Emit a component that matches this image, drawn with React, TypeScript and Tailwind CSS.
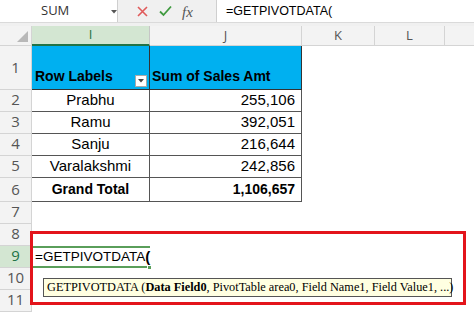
import React from "react";

const font = { fontFamily: '"Liberation Sans", Arial, sans-serif' };

function RowHead({ n, h, sel }: { n: number; h: string; sel?: boolean }) {
  return (
    <div
      className={`w-[32px] shrink-0 flex items-end justify-center pb-[1px] border-b border-r border-[#d4d4d4] text-[15px] ${h} ${
        sel ? "bg-[#d3e6d2] text-[#217346]" : "bg-[#f3f3f3] text-[#555]"
      }`}
      style={{ fontFamily: '"Open Sans", sans-serif' }}
    >
      {n}
    </div>
  );
}

function DataRow({ n, name, val, bold, h = "h-[22px]" }: { n: number; name: string; val: string; bold?: boolean; h?: string }) {
  return (
    <div className={`flex ${h}`}>
      <RowHead n={n} h={h} />
      <div
        className={`w-[118px] shrink-0 flex items-center justify-center border-b border-r border-[#555] text-black ${
          bold ? "font-bold text-[14px]" : "text-[15px]"
        }`}
      >
        {name}
      </div>
      <div
        className={`w-[152px] shrink-0 flex items-center justify-end pr-[6px] border-b border-r border-[#555] text-black ${
          bold ? "font-bold text-[14px]" : "text-[15px]"
        }`}
      >
        {val}
      </div>
      <div className="flex-1 bg-white" />
    </div>
  );
}

function EmptyRow({ n, sel, children }: { n: number; sel?: boolean; children?: React.ReactNode }) {
  return (
    <div className="flex h-[22px]">
      <RowHead n={n} h="h-[22px]" sel={sel} />
      {children ?? <div className="flex-1 bg-white" />}
    </div>
  );
}

export default function App() {
  return (
    <div className="relative w-[474px] h-[312px] overflow-hidden bg-white" style={font}>
      {/* formula bar */}
      <div className="flex h-[23px] bg-[#f0f0f0] border-b border-[#dadada]">
        <div className="w-[118px] h-[22px] bg-white border-r border-[#cfcfcf] flex items-center relative">
          <span className="absolute left-[41px] text-[13px] text-[#333]" style={{ fontFamily: '"Open Sans", sans-serif' }}>
            SUM
          </span>
          <svg className="absolute left-[111px] top-[10px]" width="6" height="4" viewBox="0 0 6 4">
            <path d="M0 0 L6 0 L3 3.5 Z" fill="#555" />
          </svg>
        </div>
        <div className="w-[98px] flex items-center relative">
          <svg className="absolute left-[19px] top-[6px]" width="11" height="11" viewBox="0 0 11 11">
            <path d="M1 1 L10 10 M10 1 L1 10" stroke="#e05a5a" strokeWidth="1.6" />
          </svg>
          <svg className="absolute left-[41px] top-[5px]" width="13" height="12" viewBox="0 0 13 12">
            <path d="M1 6.5 L4.5 10 L12 1.5" stroke="#3f9a3f" strokeWidth="1.8" fill="none" />
          </svg>
          <span
            className="absolute left-[64px] top-[1px] text-[15px] italic text-[#555]"
            style={{ fontFamily: '"Liberation Serif", serif' }}
          >
            fx
          </span>
        </div>
        <div className="flex-1 h-[22px] bg-white border-l border-[#cfcfcf] flex items-center pl-[9px] text-[12.5px] text-black">
          =GETPIVOTDATA(
        </div>
      </div>
      <div className="h-[3px] bg-[#f0f0f0]" />
      {/* column headers */}
      <div className="flex h-[20px] bg-[#f3f3f3] text-[13px] text-[#555]" style={{ fontFamily: '"Open Sans", sans-serif' }}>
        <div className="w-[32px] shrink-0 border-r border-b border-[#d4d4d4] relative">
          <svg className="absolute left-[17px] top-[5px]" width="11" height="11" viewBox="0 0 11 11">
            <path d="M11 0 L11 11 L0 11 Z" fill="#b8b8b8" />
          </svg>
        </div>
        <div className="w-[118px] shrink-0 bg-[#d3e6d2] text-[#217346] border-b-2 border-[#217346] border-r border-r-[#c6c6c6] flex items-center justify-center">
          I
        </div>
        <div className="w-[152px] shrink-0 border-r border-b border-[#d4d4d4] flex items-center justify-center">J</div>
        <div className="w-[73px] shrink-0 border-r border-b border-[#d4d4d4] flex items-center justify-center">K</div>
        <div className="w-[70px] shrink-0 border-r border-b border-[#d4d4d4] flex items-center justify-center">L</div>
        <div className="flex-1 border-b border-[#d4d4d4]" />
      </div>
      {/* row 1 */}
      <div className="flex h-[44px]">
        <div
          className="w-[32px] shrink-0 flex items-center justify-center border-b border-r border-[#d4d4d4] bg-[#f3f3f3] text-[15px] text-[#555]"
          style={{ fontFamily: '"Open Sans", sans-serif' }}
        >
          1
        </div>
        <div className="w-[118px] shrink-0 bg-[#00b0f0] border-b border-r border-[#333] flex items-end pb-[2px] pl-[3px] relative font-bold text-[14px] text-black">
          Row Labels
          <div className="absolute right-[2px] bottom-[2px] w-[12px] h-[12px] bg-white border border-[#aaa] flex items-center justify-center">
            <svg width="6" height="4" viewBox="0 0 6 4">
              <path d="M0 0 L6 0 L3 3.5 Z" fill="#444" />
            </svg>
          </div>
        </div>
        <div className="w-[152px] shrink-0 bg-[#00b0f0] border-b border-r border-[#333] flex items-end pb-[2px] pl-[2px] font-bold text-[14px] text-black">
          Sum of Sales Amt
        </div>
        <div className="flex-1 bg-white" />
      </div>
      <DataRow n={2} name="Prabhu" val="255,106" />
      <DataRow n={3} name="Ramu" val="392,051" />
      <DataRow n={4} name="Sanju" val="216,644" />
      <DataRow n={5} name="Varalakshmi" val="242,856" />
      <DataRow n={6} name="Grand Total" val="1,106,657" bold h="h-[24px]" />
      <EmptyRow n={7} />
      <EmptyRow n={8} />
      <EmptyRow n={9} sel>
        <div className="w-[118px] shrink-0 relative border-t-2 border-b-2 border-[#5a9e5a] flex items-center pl-[3px] text-[13.5px] text-black">
          =GETPIVOTDATA<span className="font-bold text-[15px]">(</span>
          <div className="absolute right-[-2px] bottom-[-4px] w-[5px] h-[5px] bg-[#5a9e5a] border border-white" />
        </div>
        <div className="flex-1 bg-white" />
      </EmptyRow>
      <EmptyRow n={10} />
      <EmptyRow n={11} />

      {/* red highlight box */}
      <div className="absolute left-[30px] top-[231px] w-[436px] h-[74px] border-[3px] border-[#e3141b] pointer-events-none" />
      {/* tooltip */}
      <div
        className="absolute left-[43px] top-[278px] w-[409px] h-[19px] bg-[#ffffe1] border border-[#555] flex items-center pl-[3px] text-[12.3px] text-black whitespace-nowrap"
        style={{ fontFamily: '"Liberation Serif", "Times New Roman", serif' }}
      >
        GETPIVOTDATA (<span className="font-bold">Data Field0</span>, PivotTable area0, Field Name1, Field Value1, ...)
      </div>
    </div>
  );
}
